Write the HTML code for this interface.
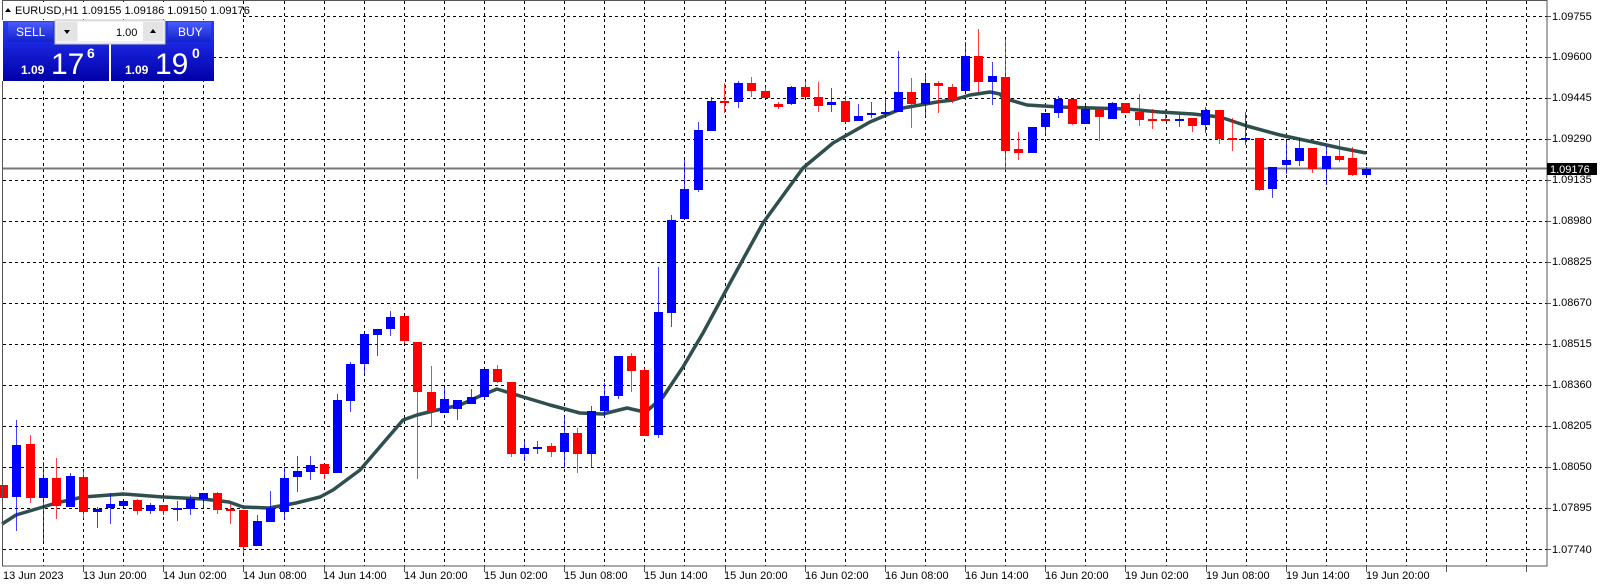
<!DOCTYPE html>
<html><head><meta charset="utf-8"><style>
html,body{margin:0;padding:0;background:#fff;width:1600px;height:586px;overflow:hidden}
svg{display:block}
text{font-family:"Liberation Sans","DejaVu Sans",sans-serif;font-size:11px;fill:#000}
</style></head><body>
<svg id="c" width="1600" height="586" viewBox="0 0 1600 586" xmlns="http://www.w3.org/2000/svg">
<g id="grid"></g>
<line x1="2" y1="168.5" x2="1547" y2="168.5" stroke="#777" stroke-width="2"/>
<polyline fill="none" stroke="#2f4f4f" stroke-width="3.5" stroke-linejoin="round" points="2,524 16,515 43,507 56,503 83,497 123,494 163,497 203,499 229,502 243,507 269,508 296,503 320,497 333,490 360,470 403,420 417,415 433,411 460,405 480,396 497,389 520,396 550,405 580,413 603,414 627,408 640,411 648,410 663,397 683,367 703,333 730,283 763,223 803,168 833,143 870,122 903,108 937,102 953,100 970,95 990,92 1000,94 1003,98 1027,105 1060,107 1093,108 1127,109 1160,112 1193,114 1220,117 1247,126 1280,135 1313,142 1340,148 1366,153"/>
<g id="candles"></g>
<rect x="2.5" y="0.5" width="1544.5" height="565.5" fill="none" stroke="#555" stroke-width="1"/>
<rect x="1547" y="163" width="50" height="12" fill="#000"/>
<g>
<text x="1552" y="20">1.09755</text>
<text x="1552" y="60">1.09600</text>
<text x="1552" y="101">1.09445</text>
<text x="1552" y="142">1.09290</text>
<text x="1550" y="173" style="fill:#fff">1.09176</text>
<text x="1552" y="183">1.09135</text>
<text x="1552" y="224">1.08980</text>
<text x="1552" y="265">1.08825</text>
<text x="1552" y="306">1.08670</text>
<text x="1552" y="347">1.08515</text>
<text x="1552" y="388">1.08360</text>
<text x="1552" y="429">1.08205</text>
<text x="1552" y="470">1.08050</text>
<text x="1552" y="511">1.07895</text>
<text x="1552" y="553">1.07740</text>
</g>
<g>
<text x="3" y="579">13 Jun 2023</text>
<text x="83" y="579">13 Jun 20:00</text>
<text x="163" y="579">14 Jun 02:00</text>
<text x="243" y="579">14 Jun 08:00</text>
<text x="323" y="579">14 Jun 14:00</text>
<text x="404" y="579">14 Jun 20:00</text>
<text x="484" y="579">15 Jun 02:00</text>
<text x="564" y="579">15 Jun 08:00</text>
<text x="644" y="579">15 Jun 14:00</text>
<text x="724" y="579">15 Jun 20:00</text>
<text x="805" y="579">16 Jun 02:00</text>
<text x="885" y="579">16 Jun 08:00</text>
<text x="965" y="579">16 Jun 14:00</text>
<text x="1045" y="579">16 Jun 20:00</text>
<text x="1125" y="579">19 Jun 02:00</text>
<text x="1206" y="579">19 Jun 08:00</text>
<text x="1286" y="579">19 Jun 14:00</text>
<text x="1366" y="579">19 Jun 20:00</text>
</g>
<rect x="3" y="2" width="240" height="15" fill="#fff"/>
<polygon points="5,12 8,8 11,12" fill="#000"/>
<text x="15" y="14">EURUSD,H1  1.09155 1.09186 1.09150 1.09176</text>
<defs>
<linearGradient id="bg" x1="0" y1="0" x2="0" y2="1"><stop offset="0" stop-color="#2a3cff"/><stop offset="1" stop-color="#0000a8"/></linearGradient>
<linearGradient id="bb" x1="0" y1="0" x2="0" y2="1"><stop offset="0" stop-color="#4a5cff"/><stop offset="1" stop-color="#1020c8"/></linearGradient>
</defs>
<rect x="2" y="20" width="212" height="61" fill="#fff"/>
<rect x="3" y="21" width="106" height="60" fill="url(#bg)"/>
<rect x="111" y="21" width="103" height="60" fill="url(#bg)"/>
<rect x="8" y="22" width="45" height="20" fill="url(#bb)"/>
<rect x="168" y="22" width="43" height="20" fill="url(#bb)"/>
<rect x="55" y="20" width="110" height="24" fill="#f0f0f0" stroke="#c8c8c8"/>
<rect x="57" y="22" width="20" height="19" fill="#e4e4e4"/>
<rect x="78" y="22" width="65" height="19" fill="#fff"/>
<rect x="143" y="22" width="20" height="19" fill="#e4e4e4"/>
<polygon points="64,30 70,30 67,34" fill="#000"/>
<polygon points="150,33 156,33 153,29" fill="#000"/>
<text x="116" y="36">1.00</text>
<text x="16" y="36" style="fill:#fff;font-size:12px">SELL</text>
<text x="178" y="36" style="fill:#fff;font-size:12px">BUY</text>
<text x="21" y="74" style="fill:#fff;font-size:12px;font-weight:bold">1.09</text>
<text x="51" y="74" style="fill:#fff;font-size:30px">17</text>
<text x="87" y="58" style="fill:#fff;font-size:14px;font-weight:bold">6</text>
<text x="125" y="74" style="fill:#fff;font-size:12px;font-weight:bold">1.09</text>
<text x="155" y="74" style="fill:#fff;font-size:30px">19</text>
<text x="192" y="58" style="fill:#fff;font-size:14px;font-weight:bold">0</text>
</svg>
<script>
(function(){
var NS="http://www.w3.org/2000/svg";
var g=document.getElementById("grid");
function ln(p,x1,y1,x2,y2,st){var l=document.createElementNS(NS,"line");l.setAttribute("x1",x1);l.setAttribute("y1",y1);l.setAttribute("x2",x2);l.setAttribute("y2",y2);for(var k in st)l.setAttribute(k,st[k]);p.appendChild(l);}
var dash={stroke:"#000","stroke-width":1,"stroke-dasharray":"3,3"};
for(var k=0;k<14;k++){var y=Math.round(15.5+41*k)+0.5;ln(g,3,y,1547,y,dash);ln(g,1547,y,1551,y,{stroke:"#555"});}
for(var k=0;k<38;k++){var x=Math.round(43+40.09*k)+0.5;ln(g,x,1,x,566,dash);if(k%2==1)ln(g,x,566,x,572,{stroke:"#555"});}
var D=[[485,498,485,498,0],[445,497,420,531,1],[444,498,435,503,0],[478,498,462,541,1],[478,506,458,519,0],[476,507,473,507,1],[477,512,471,519,0],[509,512,507,528,1],[504,508,493,524,1],[501,506,501,506,1],[500,511,499,515,0],[505,511,503,514,1],[505,511,505,515,0],[508,510,501,521,1],[499,509,495,515,1],[493,499,493,509,1],[493,510,492,514,0],[509,510,504,524,0],[510,547,510,553,0],[521,546,515,546,1],[508,522,491,522,1],[478,512,467,520,1],[471,477,456,492,1],[465,472,456,480,1],[464,474,464,479,0],[400,473,394,473,1],[364,401,362,412,1],[334,364,334,374,1],[329,335,329,356,1],[317,329,311,336,1],[316,341,316,343,0],[342,392,342,479,0],[392,412,366,427,0],[399,413,388,413,1],[400,409,400,420,1],[397,404,389,404,1],[369,397,369,399,1],[369,382,365,383,0],[382,454,382,457,0],[448,454,441,461,1],[447,448,441,454,1],[446,452,443,457,0],[433,452,418,468,1],[433,454,428,473,0],[411,454,406,467,1],[396,411,383,418,1],[356,396,356,399,1],[356,371,353,392,0],[370,436,368,436,0],[312,435,267,438,1],[220,313,215,327,1],[189,219,160,219,1],[130,190,122,192,1],[101,131,97,131,1],[101,103,83,113,0],[83,102,81,108,1],[83,91,77,97,0],[91,98,87,98,0],[104,107,102,109,0],[87,104,86,105,1],[87,97,81,97,0],[97,106,82,112,0],[102,105,88,112,1],[101,122,96,123,0],[116,121,104,121,1],[113,115,102,118,1],[112,114,97,118,1],[92,112,51,112,1],[92,104,78,128,0],[83,104,73,116,1],[83,86,81,113,0],[87,100,84,103,0],[56,91,42,91,1],[56,82,29,92,0],[76,82,62,105,1],[77,151,39,170,0],[149,153,132,160,0],[127,153,127,153,1],[113,127,113,134,1],[99,113,96,118,1],[99,124,99,125,0],[109,124,105,124,1],[109,117,109,141,0],[103,119,102,119,1],[103,113,103,113,0],[112,120,94,126,0],[119,120,109,129,0],[119,120,109,120,0],[119,121,115,127,1],[118,126,118,132,0],[110,125,107,133,1],[110,139,110,144,0],[138,139,118,151,0],[138,139,112,145,1],[138,190,138,191,0],[167,189,167,198,1],[160,165,142,174,1],[148,161,138,166,1],[148,169,148,173,0],[156,169,146,185,1],[156,160,140,162,0],[158,175,147,176,0],[169,175,167,175,1]];
var c=document.getElementById("candles");
for(var i=0;i<D.length;i++){var d=D[i];var cx=Math.round(3+13.36*i);var col=d[4]?"#0000ff":"#ff0000";
ln(c,cx+0.5,d[2],cx+0.5,d[3],{stroke:col,"stroke-width":1,"stroke-opacity":0.75});
var r=document.createElementNS(NS,"rect");var h=Math.max(2,d[1]-d[0]);r.setAttribute("x",cx-4);r.setAttribute("y",d[0]);r.setAttribute("width",9);r.setAttribute("height",h);r.setAttribute("fill",col);c.appendChild(r);}
})();
</script>
</body></html>
